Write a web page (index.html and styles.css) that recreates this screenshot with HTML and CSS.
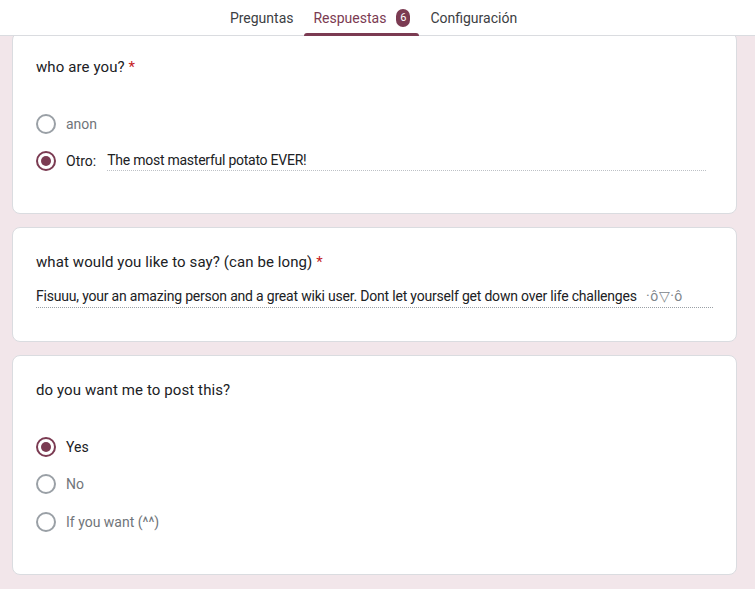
FILE: index.html
```html
<!DOCTYPE html>
<html lang="es">
<head>
<meta charset="utf-8">
<title>Respuestas</title>
<link rel="stylesheet" href="styles.css">
</head>
<body>
<header class="tabs">
  <div class="tab">Preguntas</div>
  <div class="tab active">Respuestas <span class="badge">6</span></div>
  <div class="tab">Configuración</div>
</header>
<main class="content">
  <section class="card first">
    <div class="question">who are you? <span class="req">*</span></div>
    <div class="options">
      <div class="option"><span class="radio"></span><span class="label muted">anon</span></div>
      <div class="option"><span class="radio checked"></span><span class="label">Otro:</span><span class="other">The most masterful potato EVER!</span></div>
    </div>
  </section>
  <section class="card">
    <div class="question">what would you like to say? (can be long) <span class="req">*</span></div>
    <div class="answer">Fisuuu, your an amazing person and a great wiki user. Dont let yourself get down over life challenges <span class="emo">·ô▽·ô</span></div>
  </section>
  <section class="card">
    <div class="question">do you want me to post this?</div>
    <div class="options">
      <div class="option"><span class="radio checked"></span><span class="label">Yes</span></div>
      <div class="option"><span class="radio"></span><span class="label muted">No</span></div>
      <div class="option"><span class="radio"></span><span class="label muted">If you want (^^)</span></div>
    </div>
  </section>
  <div class="footer">Enviado: 3/6/23, 12:27</div>
</main>
</body>
</html>
```
FILE: styles.css
```css
* { box-sizing: border-box; }
html, body { margin: 0; padding: 0; }
body {
  background: #f2e6ea;
  font-family: Roboto, "Noto Sans", "Liberation Sans", sans-serif;
  color: #202124;
  height: 589px;
  overflow: hidden;
}
.tabs {
  position: relative;
  z-index: 2;
  height: 36px;
  background: #fff;
  border-bottom: 1px solid #dadce0;
  display: flex;
  justify-content: center;
  padding-right: 8px;
}
.tab {
  font-size: 14px;
  color: #3c4043;
  padding: 0 11px;
  height: 35px;
  display: flex;
  align-items: center;
  gap: 10px;
  position: relative;
}
.tab.active { color: #7b3b52; padding: 0 9px 0 9px; }
.tab.active::after {
  content: "";
  position: absolute;
  left: 0; right: 0; bottom: -1px;
  height: 3px;
  background: #7b3b52;
  border-radius: 3px 3px 0 0;
}
.badge {
  display: inline-flex;
  align-items: center;
  justify-content: center;
  width: 14px;
  height: 18px;
  border-radius: 7px;
  background: #7b3b52;
  color: #fff;
  font-size: 11px;
}
.content {
  padding: 0 18px 0 12px;
  margin-top: -4px;
  display: flex;
  flex-direction: column;
  gap: 13px;
}
.card {
  background: #fff;
  border: 1px solid #dadce0;
  border-radius: 8px;
  padding: 22px 23px 33px 23px;
}
.question {
  font-size: 15px;
  line-height: 24px;
  letter-spacing: 0.1px;
}
.req { color: #c5221f; }
.options {
  margin-top: 26px;
  display: flex;
  flex-direction: column;
}
.option {
  height: 37px;
  display: flex;
  align-items: center;
}
.option + .option { height: 38px; }
.radio {
  width: 20px;
  height: 20px;
  border: 2px solid #9aa0a6;
  border-radius: 50%;
  flex: none;
  display: flex;
  align-items: center;
  justify-content: center;
}
.radio.checked { border-color: #7b3b52; }
.radio.checked::after {
  content: "";
  width: 10px;
  height: 10px;
  border-radius: 50%;
  background: #7b3b52;
}
.label {
  margin-left: 10px;
  font-size: 14px;
  color: #202124;
}
.label.muted { color: #70757a; }
.other {
  margin-left: 11px;
  margin-right: 7px;
  flex: 1;
  font-size: 14px;
  letter-spacing: -0.25px;
  line-height: 20px;
  height: 21px;
  border-bottom: 1px dotted #bdc1c6;
  align-self: flex-start;
  margin-top: 8px;
}
.answer {
  margin-top: 12px;
  font-size: 14px;
  letter-spacing: -0.2px;
  line-height: 20px;
  padding-bottom: 1px;
  border-bottom: 1px dotted #9aa0a6;
  white-space: nowrap;
}
.emo { color: #80868b; font-size: 14px; margin-left: 6px; letter-spacing: 0.5px; }
.footer {
  text-align: right;
  font-size: 12px;
  color: #5f6368;
  padding-right: 8px;
  margin-top: 1px;
}
```
